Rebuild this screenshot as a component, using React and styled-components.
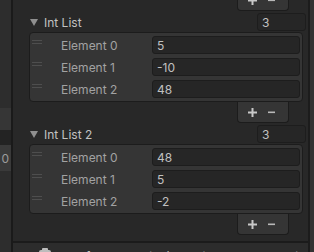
import React from "react";
import styled, { createGlobalStyle } from "styled-components";

const Global = createGlobalStyle`
  html, body { margin: 0; padding: 0; background: #282828; }
  body { font-family: Inter, "Noto Sans", sans-serif; font-size: 12px; }
  * { box-sizing: border-box; }
`;

const Root = styled.div`
  display: flex;
  width: 314px;
  height: 252px;
  overflow: hidden;
  background: #282828;
`;

const LeftCol = styled.div`
  width: 11px;
  flex: none;
  display: flex;
  flex-direction: column;
  background: #2d2d2d;
`;

const LeftSeg = styled.div`
  height: ${(p) => p.$h}px;
  flex: none;
  background: ${(p) => p.$bg};
  color: #9c9c9c;
  font-size: 12px;
  display: flex;
  align-items: center;
  justify-content: flex-end;
  padding-right: 2px;
  overflow: hidden;
`;

const VLine = styled.div`
  width: ${(p) => p.$w}px;
  flex: none;
  background: ${(p) => p.$bg};
`;

const Main = styled.div`
  flex: 1;
  display: flex;
  flex-direction: column;
  min-width: 0;
`;

const Block = styled.div`
  display: flex;
  flex-direction: column;
  margin-top: 1px;
`;

const Header = styled.div`
  height: 20px;
  display: flex;
  align-items: center;
  padding-left: 17px;
  padding-right: 2px;
  color: #c2c2c2;
`;

const Tri = styled.div`
  width: 0;
  height: 0;
  border-left: 4.5px solid transparent;
  border-right: 4.5px solid transparent;
  border-top: 7px solid #8f8f8f;
  margin-right: 6px;
  margin-top: 1px;
`;

const Title = styled.span`
  flex: 1;
`;

const Field = styled.div`
  height: 18px;
  border: 1px solid #1d1d1d;
  border-radius: 3px;
  background: #262626;
  color: #c0c0c0;
  display: flex;
  align-items: center;
  padding-left: 4px;
  width: ${(p) => (p.$w ? `${p.$w}px` : "auto")};
  flex: ${(p) => (p.$w ? "none" : "1")};
  margin-right: ${(p) => p.$mr || 0}px;
`;

const Box = styled.div`
  margin-left: 16px;
  margin-right: 5px;
  height: 70px;
  border: 1px solid #1c1c1c;
  border-radius: 4px;
  background: #353535;
  padding: 1px 0;
  display: flex;
  flex-direction: column;
`;

const Row = styled.div`
  height: 22px;
  display: flex;
  align-items: center;
`;

const Handle = styled.div`
  align-self: flex-start;
  margin-top: 6px;
  margin-left: 2px;
  width: 10px;
  height: 4px;
  border-top: 1px solid #4e4e4e;
  border-bottom: 1px solid #4e4e4e;
  flex: none;
`;

const Label = styled.span`
  margin-left: 19px;
  width: 91px;
  flex: none;
  color: #a2a2a2;
`;

const FooterWrap = styled.div`
  display: flex;
  justify-content: flex-end;
  padding-right: 19px;
  margin-top: ${(p) => p.$mt || 0}px;
`;

const Footer = styled.div`
  width: 52px;
  height: 21px;
  border: 1px solid #1c1c1c;
  border-top: none;
  border-radius: 0 0 4px 4px;
  background: #353535;
  display: flex;
  align-items: center;
  padding-left: 10px;
  gap: 11px;
`;

const Sep = styled.div`
  margin-top: 6px;
  height: 2px;
  background: #1b1b1b;
  margin-right: -2px;
`;

const Bottom = styled.div`
  flex: 1;
  background: #2c2c2c;
  display: flex;
  align-items: flex-start;
  padding-top: 5px;
  padding-left: 25px;
  color: #bdbdbd;
  overflow: hidden;
  white-space: nowrap;
`;

const BottomText = styled.span`
  margin-left: 18px;
  margin-top: 1px;
  flex: 1;
`;

const BottomRight = styled.span`
  margin-right: 6px;
  margin-top: 1px;
`;

const PlusIcon = () => (
  <svg width="9" height="9" viewBox="0 0 9 9">
    <rect x="3.5" y="0" width="2" height="9" fill="#c8c8c8" />
    <rect x="0" y="3.5" width="9" height="2" fill="#c8c8c8" />
  </svg>
);

const MinusIcon = () => (
  <svg width="7" height="9" viewBox="0 0 7 9">
    <rect x="0" y="3.5" width="7" height="1.6" fill="#b8b8b8" />
  </svg>
);

const MatIcon = () => (
  <svg width="14" height="14" viewBox="0 0 14 14">
    <rect x="1" y="2" width="12" height="11" rx="2" fill="#bcbcbc" />
    <rect x="4" y="0" width="6" height="3" rx="1" fill="#bcbcbc" />
  </svg>
);

const ListFooter = ({ mt }) => (
  <FooterWrap $mt={mt}>
    <Footer>
      <PlusIcon />
      <MinusIcon />
    </Footer>
  </FooterWrap>
);

const IntList = ({ title, values }) => (
  <Block>
    <Header>
      <Tri />
      <Title>{title}</Title>
      <Field $w={49}>{values.length}</Field>
    </Header>
    <Box>
      {values.map((v, i) => (
        <Row key={i}>
          <Handle />
          <Label>Element {i}</Label>
          <Field $mr={2}>{v}</Field>
        </Row>
      ))}
    </Box>
    <ListFooter />
  </Block>
);

export default function App() {
  return (
    <Root>
      <Global />
      <LeftCol>
        <LeftSeg $h={108} $bg="#2d2d2d" />
        <LeftSeg $h={22} $bg="#363636" />
        <LeftSeg $h={15} $bg="#232323" />
        <LeftSeg $h={26} $bg="#3a3a3a">0</LeftSeg>
      </LeftCol>
      <VLine $w={2} $bg="#1a1a1a" />
      <Main>
        <ListFooter mt={-10} />
        <IntList title="Int List" values={[5, -10, 48]} />
        <IntList title="Int List 2" values={[48, 5, -2]} />
        <Sep />
        <Bottom>
          <MatIcon />
          <BottomText>Default-Material (Material)</BottomText>
          <BottomRight>Edit</BottomRight>
        </Bottom>
      </Main>
      <VLine $w={2} $bg="#1c1c1c" />
      <VLine $w={4} $bg="#333333" />
    </Root>
  );
}
